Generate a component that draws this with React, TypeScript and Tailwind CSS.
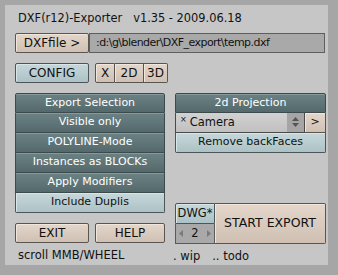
import React from 'react';

const font = { fontFamily: '"DejaVu Sans", "Liberation Sans", sans-serif' };

const tan =
  'flex items-center justify-center h-[20px] border border-[#5a5550] rounded-[2px] bg-gradient-to-b from-[#e4d6ca] to-[#cfc0b3] text-[#111] shadow-[inset_1px_1px_0_#f0e6dc]';
const teal =
  'flex items-center justify-center h-[20px] border border-[#3d4a4c] bg-gradient-to-b from-[#6b8285] to-[#55696c] text-white shadow-[inset_0_1px_0_#849a9d]';
const blue =
  'flex items-center justify-center h-[20px] border border-[#4a5658] rounded-[2px] bg-gradient-to-b from-[#c6d7da] to-[#adc2c6] text-[#111] shadow-[inset_1px_1px_0_#d8e6e8]';

const App = () => {
  const leftRows = ['Export Selection', 'Visible only', 'POLYLINE-Mode', 'Instances as BLOCKs', 'Apply Modifiers'];

  return (
    <div className="w-[338px] h-[275px] bg-[#a6a6a6] pt-[5px] pl-[5px] overflow-hidden" style={font}>
      <div className="w-[323px] h-[260px] bg-[#c6c6c6] text-[11px] text-[#111] flex flex-col">
        {/* title */}
        <div className="h-[32px] pl-[13px] pt-[5px] text-[11.4px]">
          DXF(r12)-Exporter&nbsp;&nbsp; v1.35 - 2009.06.18
        </div>

        {/* file row */}
        <div className="flex ml-[10px] h-[20px]">
          <div className={tan + ' w-[74px] text-[12px]'}>DXFfile &gt;</div>
          <div className="w-[236px] h-[20px] bg-[#a9a9a9] border border-[#5e5e5e] flex items-center pl-[6px] text-[11px] tracking-[-0.55px] text-[#111]">
            :d:\g\blender\DXF_export\temp.dxf
          </div>
        </div>

        {/* config row */}
        <div className="flex ml-[10px] mt-[10px] h-[20px]">
          <div className={blue + ' w-[74px] text-[12px]'}>CONFIG</div>
          <div className={tan + ' w-[20px] ml-[6px] text-[12px] rounded-r-none'}>X</div>
          <div className={tan + ' w-[29px] text-[12px] rounded-none border-l-0'}>2D</div>
          <div className={tan + ' w-[24px] text-[12px] rounded-l-none border-l-0'}>3D</div>
        </div>

        {/* columns */}
        <div className="flex ml-[10px] mt-[10px]">
          <div className="w-[150px] flex flex-col">
            {leftRows.map((r, i) => (
              <div key={r} className={teal + (i === 0 ? ' rounded-t-[2px]' : ' border-t-0')}>
                {r}
              </div>
            ))}
            <div className={blue + ' rounded-t-none border-t-0'}>Include Duplis</div>
            <div className="flex mt-[10px]">
              <div className={tan + ' w-[74px] text-[12px]'}>EXIT</div>
              <div className={tan + ' w-[70px] ml-[6px] text-[12px]'}>HELP</div>
            </div>
            <div className="pl-[3px] pt-[4px] text-[11.5px]">scroll MMB/WHEEL</div>
          </div>

          <div className="w-[151px] ml-[10px] flex flex-col">
            <div className={teal + ' rounded-t-[2px]'}>2d Projection</div>
            <div className="flex h-[20px]">
              <div className="w-[130px] h-[20px] border border-t-0 border-[#4a4a4a] bg-gradient-to-b from-[#d2d2d2] to-[#c0c0c0] flex items-center">
                <span className="text-[8px] ml-[4px] mr-[3px] -mt-[5px]">×</span>
                <span className="text-[11.5px]">Camera</span>
                <div className="ml-auto w-[17px] h-full bg-[#a5a5a5] flex flex-col items-center justify-center gap-[2px]">
                  <svg width="7" height="4" viewBox="0 0 7 4"><path d="M0 4 L3.5 0 L7 4 Z" fill="#555" /></svg>
                  <svg width="7" height="4" viewBox="0 0 7 4"><path d="M0 0 L3.5 4 L7 0 Z" fill="#555" /></svg>
                </div>
              </div>
              <div className={tan + ' w-[21px] border-l-0 border-t-0 rounded-none text-[11px]'}>&gt;</div>
            </div>
            <div className={blue + ' rounded-t-none border-t-0'}>Remove backFaces</div>

            <div className="flex mt-[50px] h-[41px]">
              <div className="w-[40px] flex flex-col">
                <div className={blue + ' h-[21px] rounded-b-none rounded-r-none text-[11.5px]'}>DWG*</div>
                <div className="h-[20px] border border-t-0 border-[#5a5a5a] bg-[#a9a9a9] flex items-center justify-between px-[3px] text-[11.5px]">
                  <svg width="4" height="7" viewBox="0 0 4 7"><path d="M4 0 L0 3.5 L4 7 Z" fill="#7a7a7a" /></svg>
                  <span>2</span>
                  <svg width="4" height="7" viewBox="0 0 4 7"><path d="M0 0 L4 3.5 L0 7 Z" fill="#7a7a7a" /></svg>
                </div>
              </div>
              <div className={tan + ' h-[41px] w-[111px] border-l-0 rounded-l-none text-[12.5px]'}>START EXPORT</div>
            </div>
            <div className="flex pt-[4px] text-[11.5px]">
              <span className="-ml-[2px]">. wip</span>
              <span className="ml-[12px]">.. todo</span>
            </div>
          </div>
        </div>
      </div>
    </div>
  );
};

export default App;
